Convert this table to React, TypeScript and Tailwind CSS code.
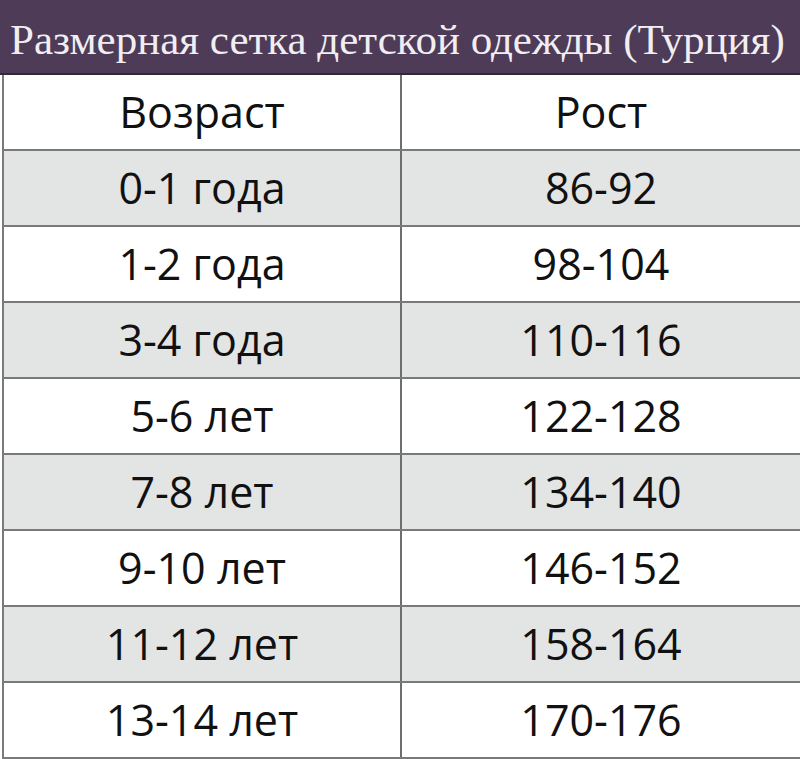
const rows: [string, string][] = [
  ["0-1 года", "86-92"],
  ["1-2 года", "98-104"],
  ["3-4 года", "110-116"],
  ["5-6 лет", "122-128"],
  ["7-8 лет", "134-140"],
  ["9-10 лет", "146-152"],
  ["11-12 лет", "158-164"],
  ["13-14 лет", "170-176"],
];

export default function App() {
  return (
    <div className="w-[800px] h-[759px] bg-white overflow-hidden">
      {/* title bar */}
      <div className="h-[75px] bg-[#4e3b58] border-b-2 border-[#2f2a33] flex items-center pl-[10px] pt-[6px]">
        <span className="text-[#f1eef2] text-[43px] leading-none font-['Liberation_Serif',serif] whitespace-nowrap">
          Размерная сетка детской одежды (Турция)
        </span>
      </div>

      <div className="ml-[2px] border-l-2 border-[#7a7a7a] font-['Open_Sans','Noto_Sans',sans-serif] text-[#111] text-[43px]">
        <div className="grid grid-cols-[398px_1fr] h-[76px] border-b-2 border-[#7a7a7a] bg-white">
          <div className="flex items-center justify-center border-r-2 border-[#6e6e6e]">Возраст</div>
          <div className="flex items-center justify-center">Рост</div>
        </div>
        {rows.map(([age, height], i) => (
          <div
            key={age}
            className={`grid grid-cols-[398px_1fr] h-[76px] border-b-2 border-[#7a7a7a] ${i % 2 === 0 ? "bg-[#e3e4e4]" : "bg-white"}`}
          >
            <div className="flex items-center justify-center border-r-2 border-[#6e6e6e]">{age}</div>
            <div className="flex items-center justify-center">{height}</div>
          </div>
        ))}
      </div>
    </div>
  );
}
